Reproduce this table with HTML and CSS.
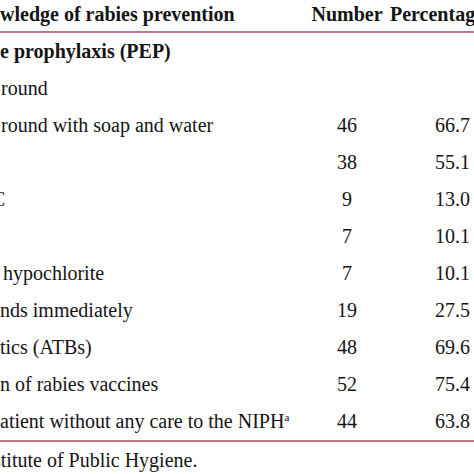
FILE: index.html
```html
<!DOCTYPE html>
<html>
<head>
<meta charset="utf-8">
<link rel="stylesheet" href="styles.css">
</head>
<body>
<div class="table">
  <div class="row head">
    <div class="lab">wledge of rabies prevention</div>
    <div class="num">Number</div>
    <div class="pct">Percentage</div>
  </div>
  <div class="body">
    <div class="row"><div class="lab bold">e prophylaxis (PEP)</div><div class="num"></div><div class="pct"></div></div>
    <div class="row"><div class="lab in1">round</div><div class="num"></div><div class="pct"></div></div>
    <div class="row"><div class="lab in1">round with soap and water</div><div class="num">46</div><div class="pct">66.7</div></div>
    <div class="row"><div class="lab"></div><div class="num">38</div><div class="pct">55.1</div></div>
    <div class="row"><div class="lab cut-c">C</div><div class="num">9</div><div class="pct">13.0</div></div>
    <div class="row"><div class="lab"></div><div class="num">7</div><div class="pct">10.1</div></div>
    <div class="row"><div class="lab in3">hypochlorite</div><div class="num">7</div><div class="pct">10.1</div></div>
    <div class="row"><div class="lab">nds immediately</div><div class="num">19</div><div class="pct">27.5</div></div>
    <div class="row"><div class="lab">tics (ATBs)</div><div class="num">48</div><div class="pct">69.6</div></div>
    <div class="row"><div class="lab">n of rabies vaccines</div><div class="num">52</div><div class="pct">75.4</div></div>
    <div class="row"><div class="lab">atient without any care to the NIPH<sup class="sup">a</sup></div><div class="num">44</div><div class="pct">63.8</div></div>
  </div>
  <div class="foot">stitute of Public Hygiene.</div>
</div>
</body>
</html>
```
FILE: styles.css
```css
html, body {
  margin: 0;
  padding: 0;
  background: #ffffff;
  overflow: hidden;
}

body {
  width: 474px;
  height: 474px;
  font-family: "Liberation Serif", "Times New Roman", serif;
  font-size: 20px;
  color: #141414;
}

.table {
  width: 474px;
}

.row {
  display: grid;
  grid-template-columns: 310px 74px 90px;
  height: 37px;
  line-height: 37px;
  white-space: nowrap;
}

.head {
  height: 31px;
  line-height: 28px;
  font-weight: bold;
  border-bottom: 2px solid #b97a80;
}

.body {
  border-bottom: 2px solid #b97a80;
}

.lab {
  overflow: visible;
}

.bold {
  font-weight: bold;
}

.in1 {
  padding-left: 1px;
}

.in3 {
  padding-left: 3px;
}

.cut-c {
  text-indent: -8px;
}

.num {
  text-align: center;
}

.head .pct {
  text-align: left;
  padding-left: 6px;
}

.pct {
  text-align: right;
  padding-right: 4px;
}

.sup {
  font-size: 11px;
  line-height: 0;
  vertical-align: 7px;
}

.foot {
  height: 36px;
  line-height: 36px;
  text-indent: -7px;
  white-space: nowrap;
}
```
